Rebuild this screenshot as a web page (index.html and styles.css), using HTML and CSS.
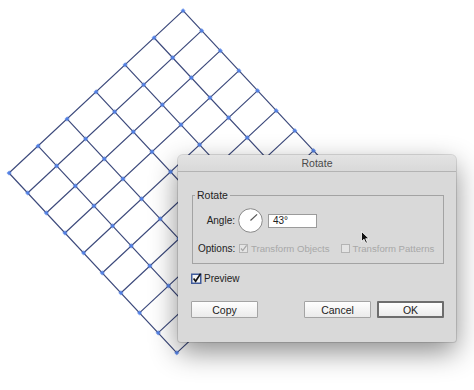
FILE: index.html
```html
<!DOCTYPE html>
<html lang="en">
<head>
    <meta charset="UTF-8">
    <meta name="viewport" content="width=device-width, initial-scale=1.0">
    <title>Rotate</title>
    <link rel="stylesheet" href="styles.css">
</head>
<body>
    <div class="desk">
        <!-- artwork: 6 x 9 grid rotated by 43 degrees -->
        <svg class="artwork" width="474" height="390" viewBox="0 0 474 390">
            <defs>
                <pattern id="anchors" patternUnits="userSpaceOnUse" width="39.667" height="27.333">
                    <rect x="-1.7" y="-1.7" width="3.4" height="3.4" fill="#4f7fe6"/>
                    <rect x="37.967" y="-1.7" width="3.4" height="3.4" fill="#4f7fe6"/>
                    <rect x="-1.7" y="25.633" width="3.4" height="3.4" fill="#4f7fe6"/>
                    <rect x="37.967" y="25.633" width="3.4" height="3.4" fill="#4f7fe6"/>
                </pattern>
            </defs>
            <g transform="translate(9 173) rotate(-43)">
                <path class="grid-lines" d="M0 0V246M39.67 0V246M79.33 0V246M119 0V246M158.67 0V246M198.33 0V246M238 0V246
                    M0 0H238M0 27.33H238M0 54.67H238M0 82H238M0 109.33H238M0 136.67H238M0 164H238M0 191.33H238M0 218.67H238M0 246H238"/>
                <rect x="-2" y="-2" width="242" height="250" fill="url(#anchors)"/>
            </g>
        </svg>

        <div class="dialog">
            <div class="title-bar">Rotate</div>
            <div class="dialog-body">
                <fieldset class="group">
                    <legend>Rotate</legend>
                    <div class="field-row angle-row">
                        <span class="field-label">Angle:</span>
                        <svg class="dial" width="25" height="25" viewBox="0 0 25 25">
                            <circle cx="12.5" cy="12.5" r="11.8" fill="#fff" stroke="#8a8a8a" stroke-width="1"/>
                            <line x1="12.5" y1="12.5" x2="19.1" y2="6.4" stroke="#555" stroke-width="1.2"/>
                        </svg>
                        <span class="angle-field">43°</span>
                    </div>
                    <div class="field-row options-row">
                        <span class="field-label">Options:</span>
                        <span class="option is-disabled">
                            <svg class="check" width="9" height="9" viewBox="0 0 9 9">
                                <rect x="0.5" y="0.5" width="8" height="8" fill="#e4e4e4" stroke="#b4b4b4"/>
                                <path d="M2 4.5L3.8 6.6L7.6 1.4" fill="none" stroke="#a5a5a5" stroke-width="1.2"/>
                            </svg>
                            Transform Objects
                        </span>
                        <span class="option option-last is-disabled">
                            <svg class="check" width="9" height="9" viewBox="0 0 9 9">
                                <rect x="0.5" y="0.5" width="8" height="8" fill="#e4e4e4" stroke="#b4b4b4"/>
                            </svg>
                            Transform Patterns
                        </span>
                    </div>
                </fieldset>

                <div class="preview-row">
                    <svg class="preview-check" width="11" height="11" viewBox="0 0 11 11">
                        <rect x="0.75" y="1.25" width="9" height="9" fill="#f4f4f4" stroke="#3f5a9a" stroke-width="1.5"/>
                        <path d="M2.6 5.6L4.6 8.2L9.6 0.6" fill="none" stroke="#111" stroke-width="1.7"/>
                    </svg>
                    <span>Preview</span>
                </div>

                <div class="button-row">
                    <button class="btn btn-copy">Copy</button>
                    <button class="btn">Cancel</button>
                    <button class="btn btn-default">OK</button>
                </div>
            </div>

            <svg class="cursor" width="9" height="13" viewBox="0 0 9 13">
                <path d="M0.5 0.5L0.5 10.5L3 8.2L4.8 12.2L6.4 11.5L4.7 7.7L8 7.7Z" fill="#111" stroke="#fff" stroke-width="0.8"/>
            </svg>
        </div>
    </div>
</body>
</html>
```

FILE: styles.css
```css
body {
    margin: 0;
    background: #fff;
    font-family: "Liberation Sans", Arial, sans-serif;
    font-size: 10px;
    color: #222;
}
.desk {
    position: relative;
    width: 474px;
    height: 390px;
    overflow: hidden;
}
.artwork {
    position: absolute;
    left: 0;
    top: 0;
}
.grid-lines {
    fill: none;
    stroke: #3d4a7c;
    stroke-width: 1.2;
}

/* dialog window */
.dialog {
    position: absolute;
    left: 178px;
    top: 155px;
    width: 278px;
    background: #d9d9d9;
    border-radius: 5px 5px 3px 3px;
    box-shadow: 0 0 0 1px rgba(0, 0, 0, 0.12), 0 10px 28px rgba(0, 0, 0, 0.45);
}
.title-bar {
    height: 16px;
    line-height: 16px;
    text-align: center;
    font-size: 10.5px;
    color: #4a4a4a;
    background: linear-gradient(#e3e3e3, #d9d9d9);
    border-bottom: 1px solid #b3b3b3;
    border-radius: 5px 5px 0 0;
}
.dialog-body {
    padding: 0 12px 24px 13px;
}

.group {
    margin: 17px 0 0 1px;
    padding: 7px 0 8px 5px;
    border: 1px solid #a3a3a3;
    min-width: 0;
}
.group legend {
    margin-left: -3px;
    padding: 0 2px;
    line-height: 12px;
    font-size: 10.5px;
    color: #222;
}
.field-row {
    display: flex;
    align-items: center;
    white-space: nowrap;
}
.field-label {
    flex-shrink: 0;
    width: 37px;
    margin-right: 3px;
    text-align: right;
}
.angle-row {
    height: 25px;
}
.dial {
    display: block;
}
.angle-field {
    width: 49px;
    height: 14px;
    margin-left: 5px;
    box-sizing: border-box;
    padding: 0 4px;
    border: 1px solid #9b9b9b;
    background: #fff;
    line-height: 12px;
    color: #222;
}
.options-row {
    margin-top: 8px;
    height: 14px;
}
.option {
    display: flex;
    flex-shrink: 0;
    align-items: center;
    margin-left: 1px;
    font-size: 9.6px;
}
.option-last {
    margin-left: 11px;
}
.check {
    display: block;
    margin-right: 3px;
}
.is-disabled {
    color: #a8a8a8;
}

.preview-row {
    display: flex;
    align-items: center;
    height: 12px;
    margin-top: 8px;
}
.preview-check {
    display: block;
    margin-right: 2px;
}

.button-row {
    display: flex;
    gap: 6px;
    margin-top: 17px;
}
.btn {
    width: 67px;
    height: 17px;
    padding: 0;
    border: 1px solid #a4a4a4;
    border-radius: 1px;
    background: linear-gradient(#fefefe, #ebebeb);
    font: inherit;
    font-size: 10.5px;
    color: #222;
}
.btn-copy {
    margin-right: auto;
}
.btn-default {
    border: 2px solid #6d6d6d;
}

.cursor {
    position: absolute;
    left: 183px;
    top: 76px;
}
```
